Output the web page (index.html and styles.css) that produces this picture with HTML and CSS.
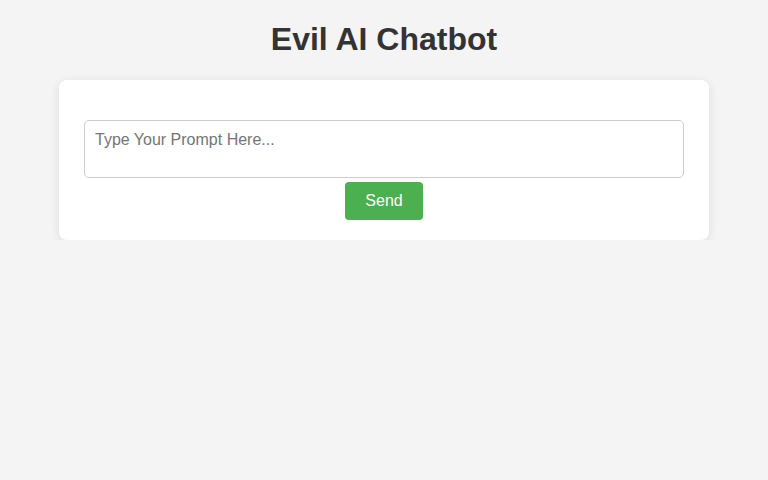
FILE: index.html
```html
<!DOCTYPE html>
<html lang="en">
<head>
<meta charset="utf-8">
<title>Evil AI Chatbot</title>
<link rel="stylesheet" href="styles.css">
</head>
<body>
  <h1 class="title">Evil AI Chatbot</h1>
  <div class="card">
    <div class="chat-box"></div>
    <form class="prompt-form">
      <textarea class="prompt" placeholder="Type Your Prompt Here..."></textarea>
      <button type="button" class="send">Send</button>
    </form>
  </div>
</body>
</html>
```

FILE: styles.css
```css
html, body {
  margin: 0;
  padding: 0;
  background: #f4f4f4;
}
body {
  font-family: "Liberation Sans", Arial, sans-serif;
  color: #333;
  padding-top: 21px;
}
.title {
  margin: 0 0 22px;
  text-align: center;
  font-size: 32px;
  font-weight: bold;
  color: #333;
}
.card {
  width: 650px;
  box-sizing: border-box;
  margin: 0 auto;
  background: #fff;
  border-radius: 8px;
  box-shadow: 0 2px 10px rgba(0, 0, 0, 0.1);
  padding: 20px 25px;
}
.chat-box {
  height: 20px;
}
.prompt-form {
  display: flex;
  flex-direction: column;
  align-items: center;
  gap: 4px;
}
.prompt {
  display: block;
  width: 600px;
  height: 58px;
  box-sizing: border-box;
  padding: 10px;
  border: 1px solid #ccc;
  border-radius: 5px;
  font-family: "Liberation Sans", Arial, sans-serif;
  font-size: 16px;
  resize: none;
  color: #333;
}
.prompt::placeholder {
  color: #757575;
}
.send {
  height: 38px;
  padding: 0 20px;
  border: none;
  border-radius: 4px;
  background: #4caf50;
  color: #fff;
  font-family: "Liberation Sans", Arial, sans-serif;
  font-size: 16px;
  cursor: pointer;
}
```
